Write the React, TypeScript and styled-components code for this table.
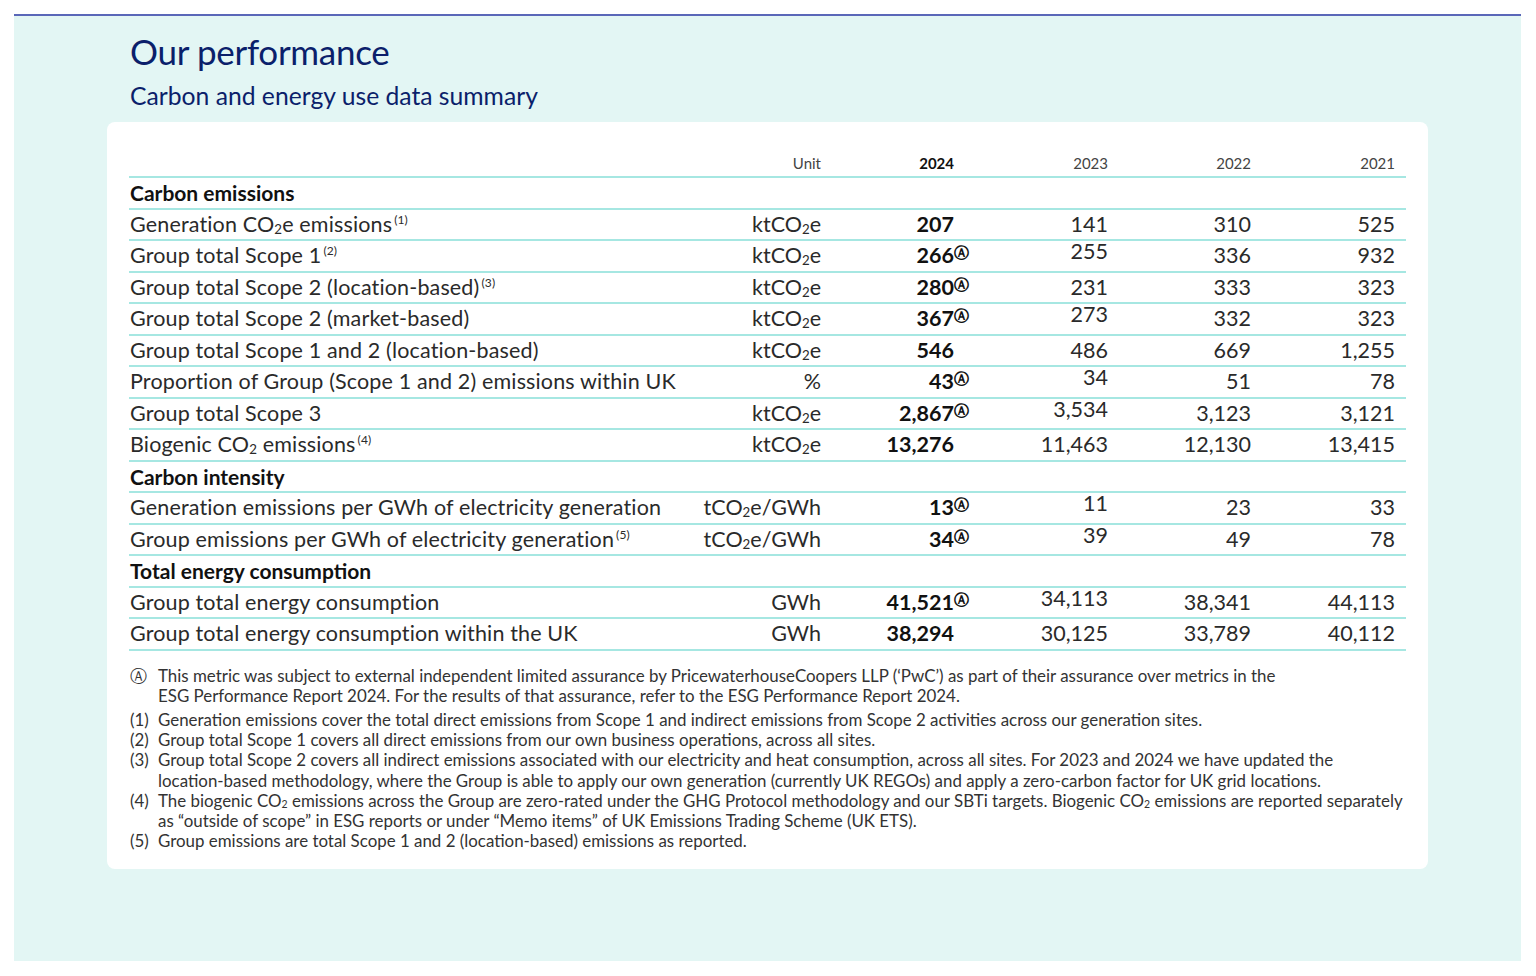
import React from 'react';
import styled, { createGlobalStyle } from 'styled-components';

const GlobalStyle = createGlobalStyle`
  html, body {
    margin: 0;
    padding: 0;
    background: #ffffff;
  }
  body {
    font-family: Lato, "Open Sans", sans-serif;
  }
`;

const Page = styled.div`
  padding: 14px 15px 15px 14px;
  width: 1536px;
  height: 976px;
  box-sizing: border-box;
`;

const Panel = styled.section`
  background: #e3f6f4;
  border-top: 2px solid #5a67b8;
  height: 947px;
  box-sizing: border-box;
  padding: 14px 93px 0 93px;
`;

const Title = styled.h1`
  margin: 0 0 0 23px;
  font-family: Lato, sans-serif;
  font-weight: 400;
  font-size: 35px;
  line-height: 42px;
  color: #0b1f6b;
  letter-spacing: -0.3px;
`;

const Subtitle = styled.h2`
  margin: 9px 0 0 23px;
  font-family: Lato, sans-serif;
  font-weight: 400;
  font-size: 24.7px;
  line-height: 30px;
  color: #0b1f6b;
`;

const Card = styled.div`
  margin-top: 11px;
  background: #ffffff;
  border-radius: 8px;
  padding: 29px 22px 18px 22px;
`;

const Table = styled.table`
  width: 100%;
  border-collapse: collapse;
  table-layout: fixed;
  color: #222;
`;

const HeadCell = styled.th<{ $bold?: boolean; $first?: boolean }>`
  font-family: Lato, sans-serif;
  font-weight: ${({ $bold }) => ($bold ? 700 : 400)};
  font-size: 15px;
  color: ${({ $bold }) => ($bold ? '#111' : '#444')};
  text-align: ${({ $first }) => ($first ? 'left' : 'right')};
  height: 25px;
  line-height: 25px;
  padding: 0;
  border-bottom: 2px solid #a6e7e2;
  &:last-child {
    padding-right: 11px;
  }
`;

const Row = styled.tr`
  border-bottom: 2px solid #a6e7e2;
`;

const cellBase = `
  font-size: 21.5px;
  height: 29.5px;
  line-height: 29.5px;
  padding: 0;
  white-space: nowrap;
`;

const SectionCell = styled.td`
  ${cellBase}
  font-weight: 700;
  font-size: 21px;
  color: #111;
  padding-left: 1px;
`;

const LabelCell = styled.td`
  ${cellBase}
  padding-left: 1px;
  color: #2a2a2a;
  letter-spacing: 0.15px;
`;

const NumCell = styled.td<{ $bold?: boolean; $raise?: boolean }>`
  ${cellBase}
  text-align: right;
  font-weight: ${({ $bold }) => ($bold ? 700 : 400)};
  color: ${({ $bold }) => ($bold ? '#111' : '#2a2a2a')};
  position: relative;
  top: ${({ $raise }) => ($raise ? '-4px' : '0')};
  &:last-child {
    padding-right: 11px;
  }
`;

const Assured = styled.span`
  display: inline-block;
  width: 0;
  overflow: visible;
  font-size: 15px;
  font-weight: 700;
  vertical-align: 5px;
  line-height: 0;
`;

const Sub = styled.span`
  font-size: 0.62em;
  vertical-align: -0.12em;
  line-height: 0;
`;

const Sup = styled.sup`
  font-size: 12px;
  vertical-align: 8px;
  line-height: 0;
  margin-left: 2px;
`;

const Notes = styled.div`
  margin-top: 15px;
  display: flex;
  flex-direction: column;
`;

const Note = styled.div<{ $spaced?: boolean }>`
  display: grid;
  grid-template-columns: 28px 1fr;
  font-size: 16.9px;
  line-height: 20.2px;
  color: #333;
  padding-left: 1px;
  margin-bottom: ${({ $spaced }) => ($spaced ? '4px' : '0')};
`;

const NoteList = styled.div`
  display: flex;
  flex-direction: column;
`;

const NoteLine = styled.span`
  white-space: nowrap;
`;

const Marker = styled.span`
  white-space: nowrap;
`;

const CO2 = () => (
  <>
    CO<Sub>2</Sub>
  </>
);

const kt = (
  <>
    kt<CO2 />e
  </>
);
const tg = (
  <>
    t<CO2 />e/GWh
  </>
);

type Line = {
  section?: string;
  label?: React.ReactNode;
  unit?: React.ReactNode;
  v24?: string;
  a?: boolean;
  v23?: string;
  up?: boolean;
  v22?: string;
  v21?: string;
};

const rows: Line[] = [
  { section: 'Carbon emissions' },
  { label: <>Generation <CO2 />e emissions<Sup>(1)</Sup></>, unit: kt, v24: '207', v23: '141', v22: '310', v21: '525' },
  { label: <>Group total Scope 1<Sup>(2)</Sup></>, unit: kt, v24: '266', a: true, v23: '255', up: true, v22: '336', v21: '932' },
  { label: <>Group total Scope 2 (location-based)<Sup>(3)</Sup></>, unit: kt, v24: '280', a: true, v23: '231', v22: '333', v21: '323' },
  { label: 'Group total Scope 2 (market-based)', unit: kt, v24: '367', a: true, v23: '273', up: true, v22: '332', v21: '323' },
  { label: 'Group total Scope 1 and 2 (location-based)', unit: kt, v24: '546', v23: '486', v22: '669', v21: '1,255' },
  { label: 'Proportion of Group (Scope 1 and 2) emissions within UK', unit: '%', v24: '43', a: true, v23: '34', up: true, v22: '51', v21: '78' },
  { label: 'Group total Scope 3', unit: kt, v24: '2,867', a: true, v23: '3,534', up: true, v22: '3,123', v21: '3,121' },
  { label: <>Biogenic <CO2 /> emissions<Sup>(4)</Sup></>, unit: kt, v24: '13,276', v23: '11,463', v22: '12,130', v21: '13,415' },
  { section: 'Carbon intensity' },
  { label: 'Generation emissions per GWh of electricity generation', unit: tg, v24: '13', a: true, v23: '11', up: true, v22: '23', v21: '33' },
  { label: <>Group emissions per GWh of electricity generation<Sup>(5)</Sup></>, unit: tg, v24: '34', a: true, v23: '39', up: true, v22: '49', v21: '78' },
  { section: 'Total energy consumption' },
  { label: 'Group total energy consumption', unit: 'GWh', v24: '41,521', a: true, v23: '34,113', up: true, v22: '38,341', v21: '44,113' },
  { label: 'Group total energy consumption within the UK', unit: 'GWh', v24: '38,294', v23: '30,125', v22: '33,789', v21: '40,112' },
];

const notes: { mark: string; lines: React.ReactNode[] }[] = [
  {
    mark: 'Ⓐ',
    lines: [
      'This metric was subject to external independent limited assurance by PricewaterhouseCoopers LLP (‘PwC’) as part of their assurance over metrics in the',
      'ESG Performance Report 2024. For the results of that assurance, refer to the ESG Performance Report 2024.',
    ],
  },
  {
    mark: '(1)',
    lines: ['Generation emissions cover the total direct emissions from Scope 1 and indirect emissions from Scope 2 activities across our generation sites.'],
  },
  { mark: '(2)', lines: ['Group total Scope 1 covers all direct emissions from our own business operations, across all sites.'] },
  {
    mark: '(3)',
    lines: [
      'Group total Scope 2 covers all indirect emissions associated with our electricity and heat consumption, across all sites. For 2023 and 2024 we have updated the',
      'location-based methodology, where the Group is able to apply our own generation (currently UK REGOs) and apply a zero-carbon factor for UK grid locations.',
    ],
  },
  {
    mark: '(4)',
    lines: [
      <>The biogenic <CO2 /> emissions across the Group are zero-rated under the GHG Protocol methodology and our SBTi targets. Biogenic <CO2 /> emissions are reported separately</>,
      'as “outside of scope” in ESG reports or under “Memo items” of UK Emissions Trading Scheme (UK ETS).',
    ],
  },
  { mark: '(5)', lines: ['Group emissions are total Scope 1 and 2 (location-based) emissions as reported.'] },
];

export default function App() {
  return (
    <>
      <GlobalStyle />
      <Page>
        <Panel>
          <Title>Our performance</Title>
          <Subtitle>Carbon and energy use data summary</Subtitle>
          <Card>
            <Table>
              <colgroup>
                <col style={{ width: 571 }} />
                <col style={{ width: 121 }} />
                <col style={{ width: 133 }} />
                <col style={{ width: 154 }} />
                <col style={{ width: 143 }} />
                <col style={{ width: 155 }} />
              </colgroup>
              <thead>
                <tr>
                  <HeadCell $first />
                  <HeadCell>Unit</HeadCell>
                  <HeadCell $bold>2024</HeadCell>
                  <HeadCell>2023</HeadCell>
                  <HeadCell>2022</HeadCell>
                  <HeadCell>2021</HeadCell>
                </tr>
              </thead>
              <tbody>
                {rows.map((r, i) =>
                  r.section ? (
                    <Row key={i}>
                      <SectionCell colSpan={6}>{r.section}</SectionCell>
                    </Row>
                  ) : (
                    <Row key={i}>
                      <LabelCell>{r.label}</LabelCell>
                      <NumCell>{r.unit}</NumCell>
                      <NumCell $bold>
                        {r.v24}
                        {r.a && <Assured>Ⓐ</Assured>}
                      </NumCell>
                      <NumCell $raise={r.up}>{r.v23}</NumCell>
                      <NumCell>{r.v22}</NumCell>
                      <NumCell>{r.v21}</NumCell>
                    </Row>
                  )
                )}
              </tbody>
            </Table>
            <Notes>
              {notes.map((n, i) => (
                <Note key={i} $spaced={i === 0}>
                  <Marker>{n.mark}</Marker>
                  <NoteList>
                    {n.lines.map((l, j) => (
                      <NoteLine key={j}>{l}</NoteLine>
                    ))}
                  </NoteList>
                </Note>
              ))}
            </Notes>
          </Card>
        </Panel>
      </Page>
    </>
  );
}
